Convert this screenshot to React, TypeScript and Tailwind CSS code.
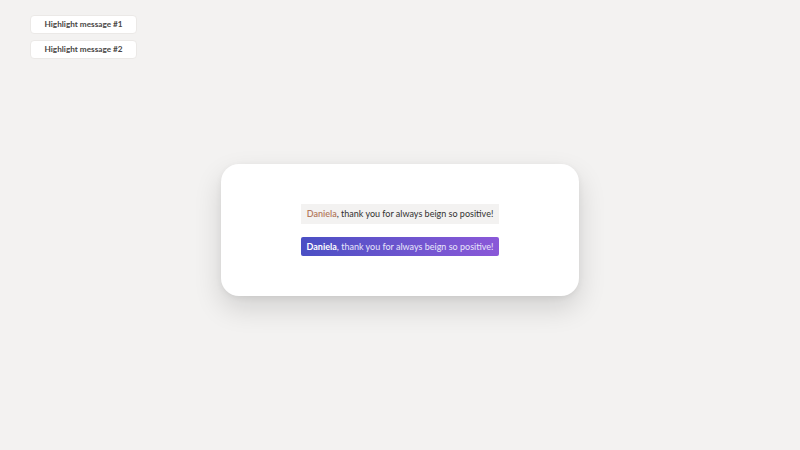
import React from "react";

interface HighlightProps {
    name: string,
    text: string,
    variant: "soft" | "gradient"
}

function Highlight({ name, text, variant }: HighlightProps) {
    if (variant === "gradient") {
        return (
            <div className="w-[198px] h-[19px] flex items-center justify-center rounded-[2px] bg-gradient-to-r from-[#4a4fc4] to-[#8a58d8]">
                <p className="whitespace-nowrap text-[9px] text-[#e8e6fb]">
                    <span className="font-bold text-white">{name}</span>{text}
                </p>
            </div>
        )
    }
    return (
        <div className="w-[198px] h-[20px] flex items-center justify-center bg-[#f3f2f1]">
            <p className="whitespace-nowrap text-[9px] text-[#323130]">
                <span className="font-semibold text-[#b47a5e]">{name}</span>{text}
            </p>
        </div>
    )
}

export default function App() {
    return (
        <div className="w-full h-screen bg-[#f3f2f1] overflow-hidden" style={{ fontFamily: 'Lato, "Noto Sans", sans-serif' }}>
            {/* Кнопки подсветки */}
            <div className="flex flex-col gap-[6px] pt-[15px] pl-[30px]">
                <button className="w-[107px] h-[19px] flex items-center justify-center bg-white rounded-[4px] border border-[#ebe9e7] text-[8.2px] font-bold text-[#484644]">Highlight message #1</button>
                <button className="w-[107px] h-[19px] flex items-center justify-center bg-white rounded-[4px] border border-[#ebe9e7] text-[8.2px] font-bold text-[#484644]">Highlight message #2</button>
            </div>

            {/* Карточка с сообщениями */}
            <div className="mt-[105px] mx-auto w-[358px] h-[132px] bg-white rounded-[18px] shadow-[0_12px_28px_rgba(0,0,0,0.14),0_2px_6px_rgba(0,0,0,0.06)] flex flex-col items-center justify-center gap-[13px]">
                <Highlight name="Daniela" text=", thank you for always beign so positive!" variant="soft" />
                <Highlight name="Daniela" text=", thank you for always beign so positive!" variant="gradient" />
            </div>
        </div>
    );
}
